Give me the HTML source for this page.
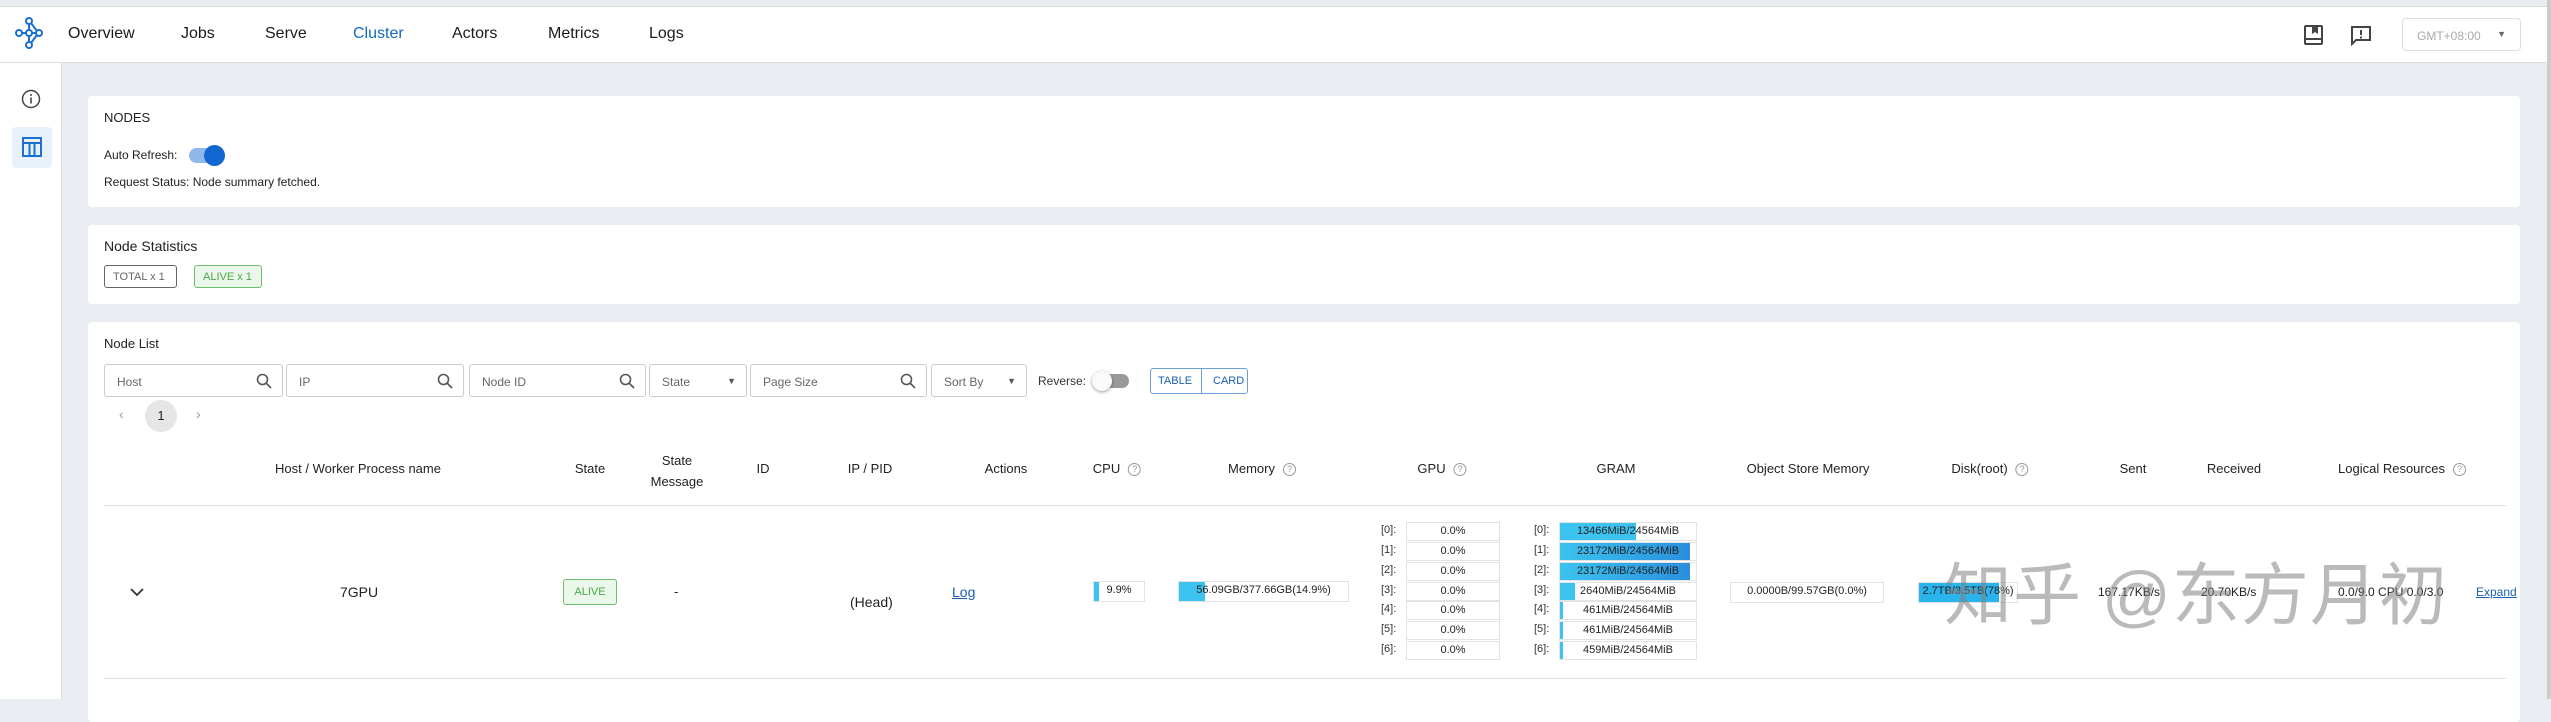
<!DOCTYPE html>
<html><head><meta charset="utf-8"><style>
*{box-sizing:border-box;margin:0;padding:0}
body{width:2551px;height:699px;overflow:hidden;background:#e9edf1;font-family:"Liberation Sans","Noto Sans CJK SC",sans-serif;color:#222;position:relative}
.a{position:absolute;white-space:nowrap}
.hdr{position:absolute;left:0;top:6px;width:2547px;height:57px;background:#fff;border-top:1px solid #ddd;border-bottom:1px solid #ddd}
.nav{position:absolute;top:25px;font-size:16px;color:#1a1a1a}
.side{position:absolute;left:0;top:63px;width:62px;height:636px;background:#fff;border-right:1px solid #ddd}
.card{position:absolute;left:88px;width:2432px;background:#fff;border-radius:4px}
.t13{font-size:12px}
.inp{position:absolute;top:364px;height:33px;border:1px solid #ccc;border-radius:3px;font-size:12px;color:#666;padding:10px 0 0 12px}
.inp svg{position:absolute;right:10px;top:8px}
.th{position:absolute;font-size:13px;color:#222;text-align:center;transform:translateX(-50%);white-space:nowrap;font-weight:500}
.q{display:inline-block;width:13px;height:13px;border:1px solid #999;border-radius:50%;font-size:9px;color:#999;line-height:11px;text-align:center;margin-left:8px;vertical-align:1px}
.box{position:absolute;height:19px;border:1px solid #e2e2e2;font-size:11px;text-align:center;line-height:17px;background:#fff;overflow:hidden}
.fill{position:absolute;left:0;top:0;bottom:0;background:#3cc3ef}
.box span{position:relative}
.lbl{position:absolute;font-size:11px;color:#333}
</style></head><body>
<div class="hdr"></div>
<svg class="a" style="left:15px;top:17px" width="28" height="32" viewBox="0 0 28 32" fill="none" stroke="#1a6fd0" stroke-width="2"><circle cx="14" cy="4" r="3"/><circle cx="4" cy="16" r="3"/><circle cx="14" cy="16" r="3"/><circle cx="24" cy="16" r="3"/><circle cx="14" cy="28" r="3"/><path d="M14 7v6M7 16h4M17 16h4M14 19v6M16 6l6 8M22 18l-6 8"/></svg>
<div class="nav" style="left:68px">Overview</div>
<div class="nav" style="left:181px">Jobs</div>
<div class="nav" style="left:265px">Serve</div>
<div class="nav" style="left:353px;color:#1369c2">Cluster</div>
<div class="nav" style="left:452px">Actors</div>
<div class="nav" style="left:548px">Metrics</div>
<div class="nav" style="left:649px">Logs</div>
<svg class="a" style="left:2304px;top:25px" width="19" height="20" viewBox="0 0 19 20"><rect x="1" y="1" width="17" height="18" rx="1" fill="none" stroke="#444" stroke-width="2"/><path d="M1 14h17" stroke="#444" stroke-width="2"/><path d="M8 1v8l3-2 3 2V1z" fill="#444"/></svg>
<svg class="a" style="left:2351px;top:26px" width="20" height="20" viewBox="0 0 20 20"><path d="M1 1h18v13H5l-4 4z" fill="none" stroke="#444" stroke-width="2"/><path d="M10 4v5M10 10.5v2" stroke="#444" stroke-width="2"/></svg>
<div class="a" style="left:2402px;top:18px;width:119px;height:33px;border:1px solid #ddd;border-radius:4px;font-size:12px;color:#aaa;padding:10px 0 0 14px">GMT+08:00<span style="position:absolute;right:14px;top:10px;font-size:9px;color:#666">▼</span></div>
<div class="a" style="left:2547px;top:0;width:4px;height:699px;background:#ccc"></div>
<div class="side"></div>
<svg class="a" style="left:21px;top:89px" width="20" height="20" viewBox="0 0 20 20"><circle cx="10" cy="10" r="8.5" fill="none" stroke="#444" stroke-width="1.5"/><path d="M10 8.5v6" stroke="#444" stroke-width="1.6"/><circle cx="10" cy="6" r="1" fill="#444"/></svg>
<div class="a" style="left:12px;top:127px;width:40px;height:41px;background:#e8f1fa;border-radius:4px"></div>
<svg class="a" style="left:22px;top:137px" width="20" height="20" viewBox="0 0 20 20" fill="none" stroke="#1a6fd0" stroke-width="2"><rect x="1" y="1" width="18" height="18"/><path d="M1 6h18M7.5 6v13M12.5 6v13"/></svg>

<div class="card" style="top:96px;height:111px"></div>
<div class="a" style="left:104px;top:110px;font-size:13px">NODES</div>
<div class="a t13" style="left:104px;top:148px">Auto Refresh:</div>
<div class="a" style="left:189px;top:148px;width:34px;height:15px;border-radius:8px;background:#8eb8ea"></div>
<div class="a" style="left:204px;top:145px;width:21px;height:21px;border-radius:50%;background:#1467d0"></div>
<div class="a t13" style="left:104px;top:175px">Request Status: Node summary fetched.</div>

<div class="card" style="top:225px;height:79px"></div>
<div class="a" style="left:104px;top:238px;font-size:14px">Node Statistics</div>
<div class="a" style="left:104px;top:265px;width:73px;height:23px;border:1px solid #666;border-radius:3px;font-size:11px;color:#666;padding:5px 0 0 8px">TOTAL x 1</div>
<div class="a" style="left:194px;top:265px;width:68px;height:23px;border:1px solid #6bbf6b;background:#eaf7ea;border-radius:3px;font-size:11px;color:#4aa64a;padding:5px 0 0 8px">ALIVE x 1</div>

<div class="card" style="top:322px;height:400px"></div>
<div class="a" style="left:104px;top:336px;font-size:13px">Node List</div>
<div class="inp" style="left:104px;width:179px">Host<svg width="16" height="16" viewBox="0 0 16 16" fill="none" stroke="#555" stroke-width="1.6"><circle cx="6.5" cy="6.5" r="5"/><path d="M10 10l5 5"/></svg></div>
<div class="inp" style="left:286px;width:178px">IP<svg width="16" height="16" viewBox="0 0 16 16" fill="none" stroke="#555" stroke-width="1.6"><circle cx="6.5" cy="6.5" r="5"/><path d="M10 10l5 5"/></svg></div>
<div class="inp" style="left:469px;width:177px">Node ID<svg width="16" height="16" viewBox="0 0 16 16" fill="none" stroke="#555" stroke-width="1.6"><circle cx="6.5" cy="6.5" r="5"/><path d="M10 10l5 5"/></svg></div>
<div class="inp" style="left:649px;width:98px">State<span style="position:absolute;right:10px;top:11px;font-size:9px;color:#555">▼</span></div>
<div class="inp" style="left:750px;width:177px">Page Size<svg width="16" height="16" viewBox="0 0 16 16" fill="none" stroke="#555" stroke-width="1.6"><circle cx="6.5" cy="6.5" r="5"/><path d="M10 10l5 5"/></svg></div>
<div class="inp" style="left:931px;width:96px">Sort By<span style="position:absolute;right:10px;top:11px;font-size:9px;color:#555">▼</span></div>
<div class="a t13" style="left:1038px;top:374px;color:#333">Reverse:</div>
<div class="a" style="left:1095px;top:374px;width:34px;height:14px;border-radius:7px;background:#9a9a9a"></div>
<div class="a" style="left:1092px;top:371px;width:20px;height:20px;border-radius:50%;background:#fafafa;box-shadow:0 1px 3px rgba(0,0,0,.4)"></div>
<div class="a" style="left:1150px;top:368px;width:98px;height:26px;border:1px solid #6a9fd8;border-radius:3px;font-size:11px;color:#1a5fb0"><span class="a" style="left:7px;top:6px">TABLE</span><span class="a" style="left:50px;top:0;height:24px;border-left:1px solid #6a9fd8"></span><span class="a" style="left:62px;top:6px">CARD</span></div>
<div class="a" style="left:119px;top:406px;font-size:14px;color:#999">‹</div>
<div class="a" style="left:145px;top:400px;width:32px;height:32px;border-radius:50%;background:#e6e6e6;font-size:13px;text-align:center;line-height:32px">1</div>
<div class="a" style="left:196px;top:406px;font-size:14px;color:#999">›</div>

<div class="th" style="left:358px;top:461px">Host / Worker Process name</div>
<div class="th" style="left:590px;top:461px">State</div>
<div class="th" style="left:677px;top:450px;line-height:21px">State<br>Message</div>
<div class="th" style="left:763px;top:461px">ID</div>
<div class="th" style="left:870px;top:461px">IP / PID</div>
<div class="th" style="left:1006px;top:461px">Actions</div>
<div class="th" style="left:1117px;top:461px">CPU<span class="q">?</span></div>
<div class="th" style="left:1262px;top:461px">Memory<span class="q">?</span></div>
<div class="th" style="left:1442px;top:461px">GPU<span class="q">?</span></div>
<div class="th" style="left:1616px;top:461px">GRAM</div>
<div class="th" style="left:1808px;top:461px">Object Store Memory</div>
<div class="th" style="left:1990px;top:461px">Disk(root)<span class="q">?</span></div>
<div class="th" style="left:2133px;top:461px">Sent</div>
<div class="th" style="left:2234px;top:461px">Received</div>
<div class="th" style="left:2402px;top:461px">Logical Resources<span class="q">?</span></div>
<div class="a" style="left:104px;top:505px;width:2402px;height:1px;background:#e0e0e0"></div>
<div class="a" style="left:104px;top:678px;width:2402px;height:1px;background:#e0e0e0"></div>

<svg class="a" style="left:130px;top:588px" width="14" height="9" viewBox="0 0 14 9"><path d="M1 1l6 6 6-6" fill="none" stroke="#333" stroke-width="1.8"/></svg>
<div class="a" style="left:340px;top:584px;font-size:14px">7GPU</div>
<div class="a" style="left:563px;top:579px;width:54px;height:26px;border:1px solid #6bbf6b;background:#eaf7ea;border-radius:3px;font-size:11px;color:#4aa64a;text-align:center;line-height:24px">ALIVE</div>
<div class="a" style="left:674px;top:584px;font-size:13px">-</div>
<div class="a" style="left:850px;top:594px;font-size:14px">(Head)</div>
<div class="a" style="left:952px;top:584px;font-size:14px;color:#1a5fb0;text-decoration:underline">Log</div>
<div class="box" style="left:1093px;top:581px;width:52px;height:21px"><div class="fill" style="width:5px"></div><span>9.9%</span></div>
<div class="box" style="left:1178px;top:581px;width:171px;height:21px"><div class="fill" style="width:26px"></div><span>56.09GB/377.66GB(14.9%)</span></div>

<div class="lbl" style="left:1381px;top:524px">[0]:</div><div class="box" style="left:1406px;top:522px;width:94px">0.0%</div>
<div class="lbl" style="left:1381px;top:544px">[1]:</div><div class="box" style="left:1406px;top:542px;width:94px">0.0%</div>
<div class="lbl" style="left:1381px;top:564px">[2]:</div><div class="box" style="left:1406px;top:562px;width:94px">0.0%</div>
<div class="lbl" style="left:1381px;top:584px">[3]:</div><div class="box" style="left:1406px;top:582px;width:94px">0.0%</div>
<div class="lbl" style="left:1381px;top:603px">[4]:</div><div class="box" style="left:1406px;top:601px;width:94px">0.0%</div>
<div class="lbl" style="left:1381px;top:623px">[5]:</div><div class="box" style="left:1406px;top:621px;width:94px">0.0%</div>
<div class="lbl" style="left:1381px;top:643px">[6]:</div><div class="box" style="left:1406px;top:641px;width:94px">0.0%</div>

<div class="lbl" style="left:1534px;top:524px">[0]:</div><div class="box" style="left:1559px;top:522px;width:138px"><div class="fill" style="width:76px"></div><span>13466MiB/24564MiB</span></div>
<div class="lbl" style="left:1534px;top:544px">[1]:</div><div class="box" style="left:1559px;top:542px;width:138px"><div class="fill" style="width:130px;background:linear-gradient(90deg,#3cc3ef,#2a8fde)"></div><span>23172MiB/24564MiB</span></div>
<div class="lbl" style="left:1534px;top:564px">[2]:</div><div class="box" style="left:1559px;top:562px;width:138px"><div class="fill" style="width:130px;background:linear-gradient(90deg,#3cc3ef,#2a8fde)"></div><span>23172MiB/24564MiB</span></div>
<div class="lbl" style="left:1534px;top:584px">[3]:</div><div class="box" style="left:1559px;top:582px;width:138px"><div class="fill" style="width:15px"></div><span>2640MiB/24564MiB</span></div>
<div class="lbl" style="left:1534px;top:603px">[4]:</div><div class="box" style="left:1559px;top:601px;width:138px"><div class="fill" style="width:3px"></div><span>461MiB/24564MiB</span></div>
<div class="lbl" style="left:1534px;top:623px">[5]:</div><div class="box" style="left:1559px;top:621px;width:138px"><div class="fill" style="width:3px"></div><span>461MiB/24564MiB</span></div>
<div class="lbl" style="left:1534px;top:643px">[6]:</div><div class="box" style="left:1559px;top:641px;width:138px"><div class="fill" style="width:3px"></div><span>459MiB/24564MiB</span></div>

<div class="box" style="left:1730px;top:582px;width:154px;height:21px">0.0000B/99.57GB(0.0%)</div>
<div class="box" style="left:1918px;top:582px;width:100px;height:21px"><div class="fill" style="width:80px;background:#2ab4ec"></div><span>2.7TB/3.5TB(78%)</span></div>
<div class="a" style="left:2098px;top:585px;font-size:12px">167.17KB/s</div>
<div class="a" style="left:2201px;top:585px;font-size:12px">20.70KB/s</div>
<div class="a" style="left:2338px;top:585px;font-size:12px">0.0/9.0 CPU 0.0/3.0</div>
<div class="a" style="left:2476px;top:585px;font-size:12px;color:#1a5fb0;text-decoration:underline">Expand</div>
<div class="a" style="left:1944px;top:540px;font-size:68px;color:rgba(130,130,130,.55);letter-spacing:1px">知乎 @东方月初</div>
</body></html>
